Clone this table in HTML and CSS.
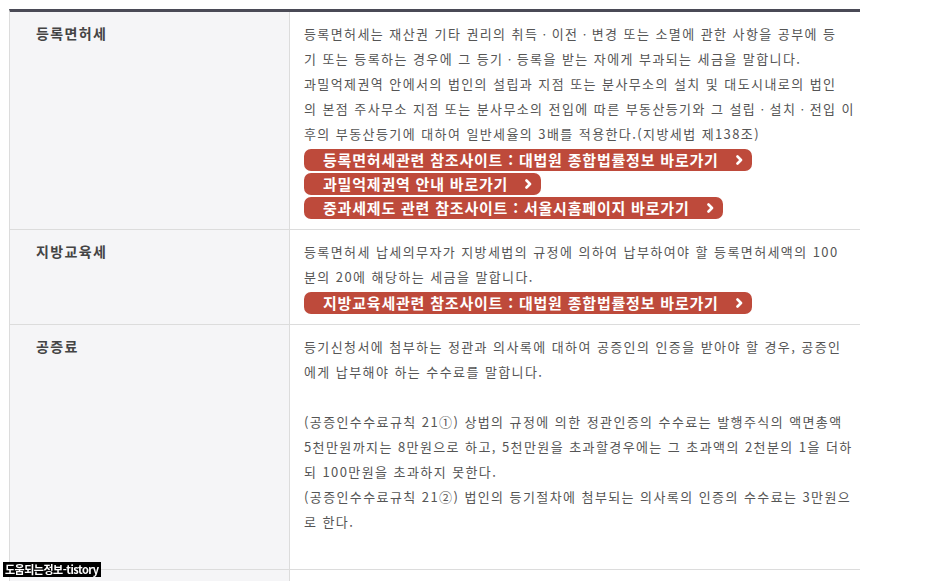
FILE: index.html
```html
<!DOCTYPE html>
<html lang="ko">
<head>
<meta charset="utf-8">
<title>등록면허세</title>
<link rel="stylesheet" href="styles.css">
</head>
<body>
<div class="tax-table">
  <div class="tax-row">
    <div class="tax-head">등록면허세</div>
    <div class="tax-body">
      <p>등록면허세는 재산권 기타 권리의 취득ㆍ이전ㆍ변경 또는 소멸에 관한 사항을 공부에 등<br>기 또는 등록하는 경우에 그 등기ㆍ등록을 받는 자에게 부과되는 세금을 말합니다.</p>
      <p>과밀억제권역 안에서의 법인의 설립과 지점 또는 분사무소의 설치 및 대도시내로의 법인<br>의 본점 주사무소 지점 또는 분사무소의 전입에 따른 부동산등기와 그 설립ㆍ설치ㆍ전입 이<br>후의 부동산등기에 대하여 일반세율의 3배를 적용한다.(지방세법 제138조)</p>
      <div class="link-list">
        <a class="link-btn" href="#">등록면허세관련 참조사이트 : 대법원 종합법률정보 바로가기<svg class="chev" viewBox="0 0 7 10" width="7" height="10"><polyline points="1.5,1.5 5,5 1.5,8.5"/></svg></a>
        <a class="link-btn" href="#">과밀억제권역 안내 바로가기<svg class="chev" viewBox="0 0 7 10" width="7" height="10"><polyline points="1.5,1.5 5,5 1.5,8.5"/></svg></a>
        <a class="link-btn" href="#">중과세제도 관련 참조사이트 : 서울시홈페이지 바로가기<svg class="chev" viewBox="0 0 7 10" width="7" height="10"><polyline points="1.5,1.5 5,5 1.5,8.5"/></svg></a>
      </div>
    </div>
  </div>
  <div class="tax-row">
    <div class="tax-head">지방교육세</div>
    <div class="tax-body">
      <p>등록면허세 납세의무자가 지방세법의 규정에 의하여 납부하여야 할 등록면허세액의 100<br>분의 20에 해당하는 세금을 말합니다.</p>
      <div class="link-list">
        <a class="link-btn" href="#">지방교육세관련 참조사이트 : 대법원 종합법률정보 바로가기<svg class="chev" viewBox="0 0 7 10" width="7" height="10"><polyline points="1.5,1.5 5,5 1.5,8.5"/></svg></a>
      </div>
    </div>
  </div>
  <div class="tax-row">
    <div class="tax-head">공증료</div>
    <div class="tax-body">
      <p>등기신청서에 첨부하는 정관과 의사록에 대하여 공증인의 인증을 받아야 할 경우, 공증인<br>에게 납부해야 하는 수수료를 말합니다.</p>
      <p class="blank">&nbsp;</p>
      <p>(공증인수수료규칙 21①) 상법의 규정에 의한 정관인증의 수수료는 발행주식의 액면총액<br>5천만원까지는 8만원으로 하고, 5천만원을 초과할경우에는 그 초과액의 2천분의 1을 더하<br>되 100만원을 초과하지 못한다.</p>
      <p>(공증인수수료규칙 21②) 법인의 등기절차에 첨부되는 의사록의 인증의 수수료는 3만원으<br>로 한다.</p>
      <p class="blank">&nbsp;</p>
    </div>
  </div>
  <div class="tax-row tax-row-empty">
    <div class="tax-head"></div>
    <div class="tax-body"></div>
  </div>
</div>
<div class="watermark">도움되는정보-tistory</div>
</body>
</html>
```

FILE: styles.css
```css
html, body {
  margin: 0;
  padding: 0;
  background: #ffffff;
}

body {
  font-family: "Noto Sans CJK KR", "Noto Sans", sans-serif;
  color: #555555;
}

.tax-table {
  margin: 9px 0 0 9px;
  width: 851px;
  border-top: 3px solid #4a4a56;
  border-left: 1px solid #dcdcdc;
  box-sizing: border-box;
}

.tax-row {
  display: grid;
  grid-template-columns: 280px 1fr;
  border-bottom: 1px solid #dcdcdc;
}

.tax-head {
  background: #f5f5f7;
  border-right: 1px solid #dcdcdc;
  padding: 9px 0 0 26px;
  font-size: 14px;
  font-weight: 700;
  line-height: 25px;
  letter-spacing: 1.4px;
  color: #444444;
}

.tax-body {
  padding: 9px 0 10px 14px;
  font-size: 13px;
  line-height: 25px;
  letter-spacing: 1.4px;
  word-spacing: 0.1px;
  white-space: nowrap;
  color: #555555;
}

.tax-body p {
  margin: 0;
}

.link-list {
  display: flex;
  flex-direction: column;
  align-items: flex-start;
  gap: 2px;
  margin-top: 3px;
}

.link-btn {
  display: inline-flex;
  align-items: center;
  gap: 17px;
  height: 22px;
  padding: 0 9px 0 19px;
  background: #be4a3b;
  border-radius: 7px;
  color: #ffffff;
  font-size: 15px;
  font-weight: 700;
  letter-spacing: 0.8px;
  word-spacing: 0;
  line-height: 22px;
  text-decoration: none;
  white-space: nowrap;
}

.chev polyline {
  fill: none;
  stroke: #ffffff;
  stroke-width: 2.6;
  stroke-linecap: round;
  stroke-linejoin: round;
}

.tax-row-empty {
  min-height: 60px;
}

.watermark {
  position: fixed;
  left: 3px;
  bottom: 4px;
  height: 15px;
  padding: 0 2px;
  background: #000000;
  color: #ffffff;
  font-size: 11px;
  font-weight: 700;
  line-height: 15px;
  letter-spacing: -0.5px;
}
```
